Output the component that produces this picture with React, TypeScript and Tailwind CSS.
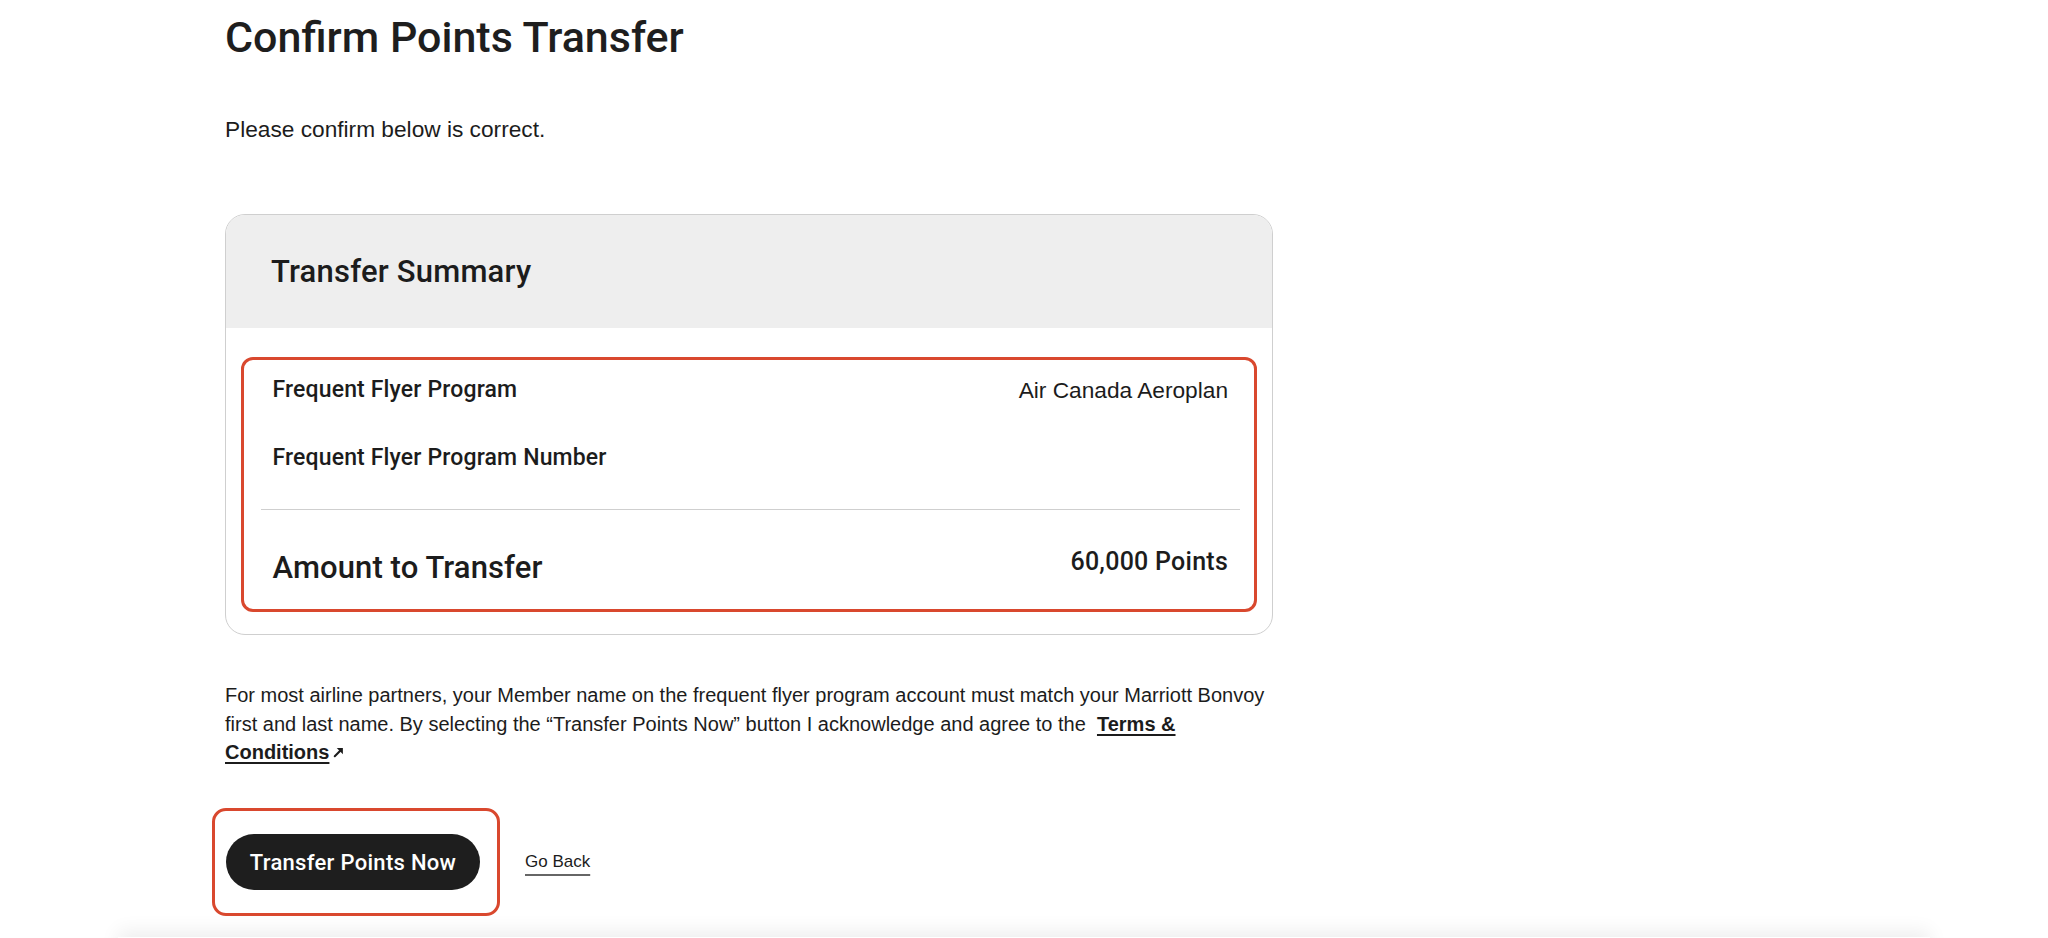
import React from "react";

const medium = "font-['Roboto',sans-serif] font-medium";

function ExternalArrow() {
  return (
    <svg viewBox="0 0 10 10" className="ml-[4px] inline-block h-[11px] w-[11px] align-[1px]" aria-hidden="true">
      <path d="M1.6 8.4 L6.8 3.2" stroke="#1c1c1c" strokeWidth="1.9" strokeLinecap="round" fill="none" />
      <polygon points="3.4,1 9,1 9,6.6" fill="#1c1c1c" />
    </svg>
  );
}

function SummaryRow({ label, value }: { label: string; value?: string }) {
  return (
    <div className="flex items-start justify-between px-3">
      <span className={`${medium} text-[23px] leading-[30px] tracking-[0.15px]`}>{label}</span>
      {value && <span className="text-[22.7px] leading-[30px]">{value}</span>}
    </div>
  );
}

export default function App() {
  return (
    <div className="min-h-screen overflow-hidden bg-white font-['Liberation_Sans',Arial,sans-serif] text-[#1c1c1c]">
      <div className="ml-[225px] w-[1048px] pt-3">
        <h1 className={`${medium} text-[43px] leading-[50px] text-[#1e1e1e]`}>Confirm Points Transfer</h1>
        <p className="mt-[51px] text-[22.7px] leading-[33px]">Please confirm below is correct.</p>

        <section className="mt-[68px] overflow-hidden rounded-[20px] border-[1.5px] border-[#cfcfcf]">
          <div className="flex h-[113px] items-center bg-[#eeeeee] pl-[45px]">
            <h2 className={`${medium} text-[31px] leading-[36px] tracking-[0.2px]`}>Transfer Summary</h2>
          </div>
          <div className="pb-[22.5px] pl-[14.5px] pr-[15px] pt-[29px]">
            <div className="rounded-[12px] border-[3px] border-[#d9482e] pb-[23px] pl-[17px] pr-[14px] pt-[15px]">
              <SummaryRow label="Frequent Flyer Program" value="Air Canada Aeroplan" />
              <div className="mt-[38px]">
                <SummaryRow label="Frequent Flyer Program Number" />
              </div>
              <div className="mt-[35.5px] h-[1.5px] bg-[#cfcfcf]" />
              <div className="mt-[35.5px] flex items-start justify-between px-3">
                <span className={`${medium} mt-[4px] text-[31px] leading-[36px] tracking-[0.1px]`}>Amount to Transfer</span>
                <span className={`${medium} text-[25px] leading-[32px] tracking-[0.25px]`}>60,000 Points</span>
              </div>
            </div>
          </div>
        </section>

        <p className="mt-[46px] text-[20px] leading-[28.5px]">
          For most airline partners, your Member name on the frequent flyer program account must match your Marriott Bonvoy first
          and last name. By selecting the “Transfer Points Now” button I acknowledge and agree to the{"\u00a0 "}
          <a href="#" className="font-bold underline decoration-[1.5px] underline-offset-[3px]">
            Terms &amp; Conditions
          </a>
          <ExternalArrow />
        </p>

        <div className="mt-[41.5px] flex items-center gap-[25px]">
          <div className="-ml-[13px] rounded-[14px] border-[3px] border-[#d9482e] py-[23px] pl-[11px] pr-[17px]">
            <button
              type="button"
              className={`${medium} h-[56px] w-[254px] rounded-full bg-[#1e1e1e] text-[22px] tracking-[0.3px] text-white`}
            >
              Transfer Points Now
            </button>
          </div>
          <a href="#" className="text-[17px] leading-[24px] underline decoration-[#666666] decoration-2 underline-offset-[7px]">
            Go Back
          </a>
        </div>
      </div>

      <div className="mx-[118px] mt-[21px] h-[60px] bg-white shadow-[0_-6px_18px_rgba(0,0,0,0.07)]" />
    </div>
  );
}
